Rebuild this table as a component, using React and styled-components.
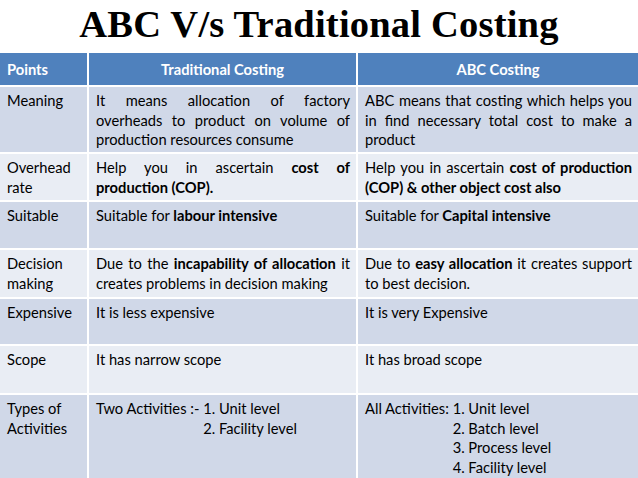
import styled, { createGlobalStyle } from 'styled-components'

const GlobalStyle = createGlobalStyle`
  html, body {
    margin: 0;
    padding: 0;
    background: #ffffff;
  }
  body {
    width: 638px;
    height: 478px;
    overflow: hidden;
  }
`

const Page = styled('div')`
  display: flex;
  flex-flow: column nowrap;
  width: 638px;
  height: 478px;
  background: #ffffff;
  font-family: Lato, 'Liberation Sans', sans-serif;
  color: #000000;
`
const Title = styled('h1')`
  margin: 0;
  height: 53px;
  line-height: 48px;
  text-align: center;
  font-family: 'Liberation Serif', 'Times New Roman', serif;
  font-size: 38.5px;
  font-weight: 700;
  letter-spacing: 0.2px;
`
const Table = styled('div')`
  display: flex;
  flex-flow: column nowrap;
  gap: 2px;
  flex: 1;
  background: #ffffff;
`
const Row = styled('div')`
  display: grid;
  grid-template-columns: 87px 267px 1fr;
  gap: 2px;
  height: ${({ $h }) => $h}px;
  flex: ${({ $last }) => ($last ? '1' : 'none')};
`
const HeadCell = styled('div')`
  display: flex;
  align-items: center;
  justify-content: ${({ $center }) => ($center ? 'center' : 'flex-start')};
  padding: 0 7px;
  background: #4f81bd;
  color: #ffffff;
  font-size: 14.7px;
  font-weight: 700;
`
const Cell = styled('div')`
  padding: 4px 6px 0 7px;
  background: ${({ $alt }) => ($alt ? '#e9edf4' : '#d0d8e8')};
  font-size: 14.7px;
  line-height: 19.5px;
  text-align: ${({ $plain }) => ($plain ? 'left' : 'justify')};
  b {
    font-weight: 700;
  }
`
const Levels = styled('div')`
  display: flex;
  flex-flow: row nowrap;
  white-space: pre;
`
const LevelList = styled('div')`
  display: flex;
  flex-flow: column nowrap;
`

const rows = [
  {
    h: 65,
    point: 'Meaning',
    trad: 'It means allocation of factory overheads to product on volume of production resources consume',
    abc: 'ABC means that costing which helps you in find necessary total cost to make a product',
  },
  {
    h: 46,
    point: <>Overhead<br />rate</>,
    trad: <>Help you in ascertain <b>cost of production (COP).</b></>,
    abc: <>Help you in ascertain <b>cost of production (COP) &amp; other object cost also</b></>,
  },
  {
    h: 46,
    point: 'Suitable',
    trad: <>Suitable for <b>labour intensive</b></>,
    abc: <>Suitable for <b>Capital intensive</b></>,
  },
  {
    h: 47,
    point: <>Decision<br />making</>,
    trad: <>Due to the <b>incapability of allocation</b> it creates problems in decision making</>,
    abc: <>Due to <b>easy allocation</b> it creates support to best decision.</>,
  },
  {
    h: 45,
    point: 'Expensive',
    trad: 'It is less expensive',
    abc: 'It is very Expensive',
  },
  {
    h: 47,
    point: 'Scope',
    trad: 'It has narrow scope',
    abc: 'It has broad scope',
  },
]

const LevelCell = ({ label, items }) => (
  <Levels>
    <span>{label}</span>
    <LevelList>
      {items.map((item) => <span key={item}>{item}</span>)}
    </LevelList>
  </Levels>
)

const App = () => {
  const bodyRows = rows.map((row, i) => (
    <Row key={i} $h={row.h}>
      <Cell $alt={i % 2 === 1} $plain>{row.point}</Cell>
      <Cell $alt={i % 2 === 1}>{row.trad}</Cell>
      <Cell $alt={i % 2 === 1}>{row.abc}</Cell>
    </Row>
  ))
  return (
    <Page>
      <GlobalStyle />
      <Title>ABC V/s Traditional Costing</Title>
      <Table>
        <Row $h={32}>
          <HeadCell>Points</HeadCell>
          <HeadCell $center>Traditional Costing</HeadCell>
          <HeadCell $center>ABC Costing</HeadCell>
        </Row>
        {bodyRows}
        <Row $h={83} $last>
          <Cell $plain>Types of<br />Activities</Cell>
          <Cell $plain>
            <LevelCell label="Two Activities :- " items={['1. Unit level', '2. Facility level']} />
          </Cell>
          <Cell $plain>
            <LevelCell label="All Activities: " items={['1. Unit level', '2. Batch level', '3. Process level', '4. Facility level']} />
          </Cell>
        </Row>
      </Table>
    </Page>
  )
}

export default App
